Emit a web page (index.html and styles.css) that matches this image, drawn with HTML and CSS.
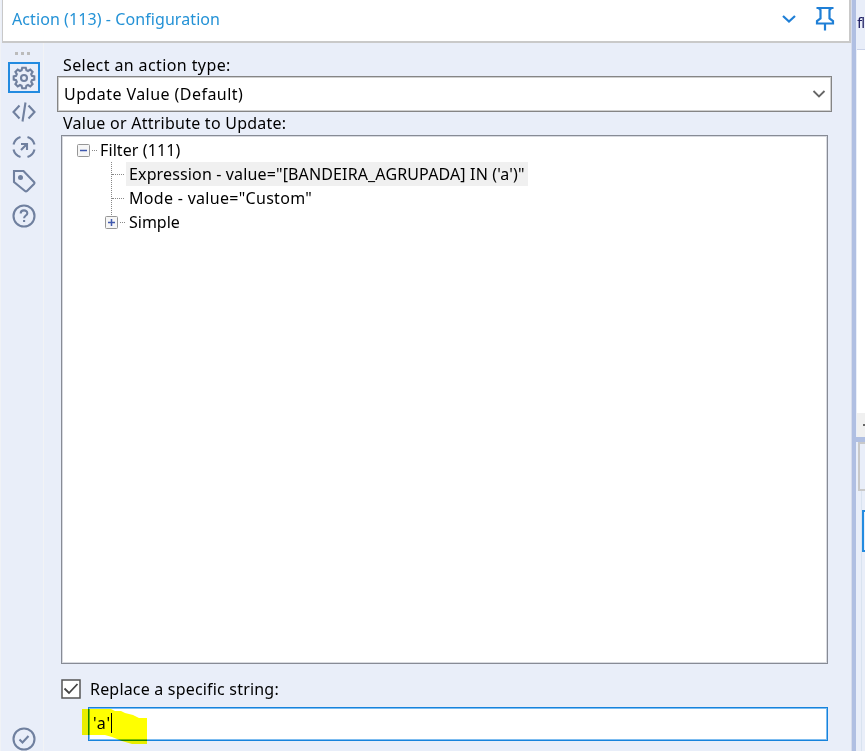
FILE: index.html
```
<!DOCTYPE html>
<html lang="en">
<head>
  <meta charset="UTF-8">
  <meta name="viewport" content="width=device-width, initial-scale=1.0">
  <title>Action (113) - Configuration</title>
  <link rel="stylesheet" href="styles.css">
</head>
<body>
  <div class="app">
    <div class="panel">
      <div class="header">
        <span class="title">Action (113) - Configuration</span>
        <svg class="collapse" width="16" height="12" viewBox="0 0 16 12"><path d="M2 3l6 5.500 6-5.500"/></svg>
        <svg class="pin" width="20" height="26" viewBox="0 0 20 26"><path d="M1.500 2h17M4 2.500l1.500 1.500v8.500l-3.500 2.500v2.500h16v-2.500l-3.500-2.500v-8.500l1.500-1.500M10 18v6.500"/></svg>
      </div>

      <div class="content">
        <!-- Left icon bar -->
        <div class="toolbar">
          <div class="grip"><i></i><i></i><i></i></div>
          <div class="tool active">
            <svg width="24" height="24" viewBox="0 0 24 24"><path d="M10.200 1.800h3.600l.6 2.500 1.600.7 2.300-1.400 2.300 2.300-1.400 2.300.7 1.600 2.400.6v3.200l-2.400.6-.7 1.600 1.400 2.300-2.300 2.300-2.300-1.400-1.600.7-.6 2.500h-3.600l-.6-2.500-1.600-.7-2.300 1.400-2.300-2.300 1.400-2.300-.7-1.600-2.400-.6v-3.200l2.400-.6.7-1.600-1.400-2.300 2.300-2.300 2.300 1.400 1.600-.7z"/><circle cx="12" cy="12" r="3"/></svg>
          </div>
          <div class="tool">
            <svg width="24" height="24" viewBox="0 0 24 24"><path d="M7.500 5.500L1.500 12 7.500 18.500M16.500 5.500l6 6.500-6 6.500M13.500 2.500l-3 19"/></svg>
          </div>
          <div class="tool">
            <svg width="24" height="24" viewBox="0 0 24 24"><path d="M1.500 9.500A10.500 10.500 0 0 1 8.500 2M15.500 2a10.500 10.500 0 0 1 7 7.500M22.500 14.500a10.500 10.500 0 0 1-7 7.500M8.500 22A10.500 10.500 0 0 1 1.500 14.500M9 9h6v6M15 9l-6 6"/></svg>
          </div>
          <div class="tool">
            <svg width="24" height="24" viewBox="0 0 24 24"><path d="M2 2h9.500L22 13a1.500 1.500 0 0 1 0 2l-7 7a1.500 1.500 0 0 1-2 0L2 13z"/><circle class="dot" cx="8.500" cy="8.500" r="2.500"/></svg>
          </div>
          <div class="tool">
            <svg width="24" height="24" viewBox="0 0 24 24"><circle cx="12" cy="12" r="10.500"/><path d="M8.700 9.500c0-4.200 6.600-4 6.600-.3 0 2.400-3.200 2.300-3.200 5M12.100 16v2"/></svg>
          </div>
          <div class="tool status">
            <svg width="24" height="24" viewBox="0 0 24 24"><circle cx="12" cy="12" r="10.500"/><path d="M7.500 12.500l3 3 6-6.500"/></svg>
          </div>
        </div>

        <div class="form">
          <div class="label">Select an action type:</div>
          <div class="select">
            <span class="select-text">Update Value (Default)</span>
            <svg width="14" height="10" viewBox="0 0 14 10"><path d="M1.500 2l5.500 5.500L12.500 2"/></svg>
          </div>
          <div class="label second">Value or Attribute to Update:</div>

          <div class="tree">
            <div class="row root">
              <svg class="box" width="13" height="13" viewBox="0 0 13 13"><rect x=".5" y=".5" width="12" height="12" rx="1"/><path d="M3 6.500h7"/></svg>
              <span class="dots short"></span>
              <span class="node filter">Filter (111)</span>
            </div>
            <div class="children">
              <div class="row">
                <span class="dots"></span>
                <span class="node selected">Expression - value="[BANDEIRA_AGRUPADA] IN ('a')"</span>
              </div>
              <div class="row">
                <span class="dots"></span>
                <span class="node mode">Mode - value="Custom"</span>
              </div>
            </div>
            <div class="row last">
              <svg class="box" width="13" height="13" viewBox="0 0 13 13"><rect x=".5" y=".5" width="12" height="12" rx="1"/><path d="M3 6.500h7M6.500 3v7"/></svg>
              <span class="dots short"></span>
              <span class="node simple">Simple</span>
            </div>
          </div>

          <div class="check">
            <svg width="20" height="20" viewBox="0 0 20 20"><rect x="1" y="1" width="18" height="18"/><path d="M3.500 9.500l4.500 4.500 8.500-9"/></svg>
            <span class="check-text">Replace a specific string:</span>
          </div>
          <div class="input">
            <span class="value">'a'</span><span class="caret"></span>
            <!-- Marker stroke over the value -->
            <svg class="marker" width="65" height="35" viewBox="0 0 65 35"><path d="M0 0h29l4 2h6l4 2 8 2 6 3h8v26H50l-10-3-10-4-7-2H0z"/></svg>
          </div>
        </div>
      </div>
    </div>

    <div class="splitter"></div>

    <!-- Neighbouring window, cut off at the edge -->
    <div class="side">
      <div class="tab">fl</div>
      <div class="canvas"></div>
      <div class="scroll"><i></i></div>
      <div class="side-splitter"></div>
      <div class="side-head"></div>
      <div class="side-body"><div class="side-tool"></div></div>
    </div>
  </div>
</body>
</html>
```

FILE: styles.css
```
* {
  box-sizing: border-box;
}

body {
  margin: 0;
  font-family: "Noto Sans", "Open Sans", sans-serif;
  font-size: 16px;
  color: #000;
  background-color: #e9eef9;
}

svg {
  display: block;
  flex: none;
  fill: none;
}

.app {
  display: flex;
  width: 865px;
  height: 751px;
  overflow: hidden;
  white-space: nowrap;
}

.panel {
  display: flex;
  flex: none;
  flex-direction: column;
  width: 851px;
  padding-left: 2px;
  border-left: 1px solid #f0f2f6;
}

.header {
  display: flex;
  align-items: center;
  width: 849px;
  height: 43px;
  margin-left: -1px;
  padding: 0 14px 4px 9px;
  background-color: #fff;
  border: 1px solid #c9c9c9;
  border-width: 0 2px 2px 1px;
  color: #2492d6;
}

.header svg {
  stroke: #1f7fd6;
  stroke-width: 2.2;
}

.title {
  flex: 1;
  letter-spacing: 0.08px;
}

.pin {
  margin-left: 18px;
}

.content {
  display: flex;
  flex: 1;
}

.toolbar {
  display: flex;
  flex-direction: column;
  align-items: center;
  width: 41px;
  padding: 9px 0 0 2px;
  border-right: 1px solid #f2f3f5;
}

.grip {
  display: flex;
  gap: 3px;
  margin: 0 0 7px -3px;
}

.grip i {
  width: 3px;
  height: 3px;
  background-color: #bbb;
}

.tool {
  display: flex;
  justify-content: center;
  align-items: center;
  width: 32px;
  height: 34px;
  margin-bottom: 0.5px;
}

.tool svg {
  stroke: #70809f;
  stroke-width: 2.1;
}

.tool .dot {
  fill: #70809f;
  stroke: none;
}

.active {
  height: 31px;
  margin-bottom: 2px;
  border: 2px solid #238be0;
}

.status {
  margin: auto 0 -5px;
}

.form {
  display: flex;
  flex-direction: column;
  padding: 12px 0 0 13px;
}

.label {
  height: 21px;
  padding-left: 6px;
  line-height: 21px;
  letter-spacing: 0.4px;
}

.second {
  height: 23px;
  line-height: 22px;
  letter-spacing: 0.25px;
}

.select {
  display: flex;
  justify-content: space-between;
  align-items: center;
  width: 775px;
  height: 36px;
  padding: 0 5px 0 6px;
  background-color: #fff;
  border: 1px solid #858585;
  box-shadow: inset 0 0 0 1px #cfcfcf;
}

.select-text {
  letter-spacing: 0.45px;
}

.select svg {
  stroke: #666;
  stroke-width: 1.8;
}

.tree {
  width: 767px;
  height: 529px;
  margin-left: 4px;
  padding: 2px 0 0 15px;
  background-color: #fff;
  border: 1px solid #878b95;
  box-shadow: inset 0 0 0 1px #d8dae0;
}

.row {
  display: flex;
  align-items: center;
  height: 24px;
}

.box {
  stroke: #969696;
}

.box rect {
  fill: #f6f6f6;
}

.box path {
  stroke: #4059ae;
  stroke-width: 1.5;
}

.dots {
  width: 12px;
  margin-right: 2px;
  border-top: 1px dotted #888;
}

.short {
  width: 5px;
  margin: 0 0 0 2px;
}

.node {
  height: 24px;
  padding: 0 3px;
  line-height: 24px;
}

.filter {
  letter-spacing: 0.1px;
}

.children {
  height: 53px;
  margin: 0 0 -5px 34px;
  border-left: 1px dotted #888;
}

.selected {
  background-color: #f0f0f0;
  letter-spacing: 0.14px;
}

.mode {
  letter-spacing: 0.3px;
}

.last {
  padding-left: 28px;
}

.simple {
  padding-left: 4px;
}

.check {
  display: flex;
  align-items: center;
  gap: 9px;
  height: 20px;
  margin: 15px 0 0 4px;
}

.check-text {
  letter-spacing: 0.19px;
}

.check rect {
  fill: #fff;
  stroke: #555;
  stroke-width: 1.5;
}

.check path {
  stroke: #444;
  stroke-width: 1.8;
}

.input {
  display: flex;
  position: relative;
  align-items: center;
  width: 740px;
  height: 34px;
  margin: 8px 0 0 31px;
  padding: 0 0 3px 4px;
  background-color: #fff;
  border: 1px solid #1783dc;
  box-shadow: inset 0 0 0 1px #7dbcf0;
}

.value {
  letter-spacing: 0.8px;
}

.caret {
  width: 1.5px;
  height: 20px;
  background-color: #000;
}

/* highlighter lies over the field's left end */
.marker {
  position: absolute;
  top: 1px;
  left: -7px;
  fill: #ff0;
  mix-blend-mode: multiply;
}

.splitter {
  flex: none;
  width: 5px;
  background-color: #b0bfe2;
  border-left: 1px solid #d6dcec;
}

.side {
  display: flex;
  flex: 1;
  flex-direction: column;
  min-width: 0;
  padding-left: 1px;
  overflow: hidden;
}

.tab {
  height: 50px;
  padding-top: 12px;
  border-bottom: 1px solid #cbd3e8;
  color: #1b1b60;
  font-size: 15px;
  letter-spacing: -1px;
}

.canvas {
  height: 363px;
  background-color: #fff;
}

.scroll {
  display: flex;
  justify-content: flex-end;
  align-items: center;
  height: 24px;
  background-color: #f0f0f0;
}

.scroll i {
  width: 2px;
  height: 2px;
  background-color: #666;
}

.side-splitter {
  height: 5px;
  margin-left: -1px;
  background-color: #b0bfe2;
}

.side-head {
  height: 49px;
  margin-left: 1px;
  border: 2px solid #c9c9c9;
  border-right: none;
}

.side-body {
  flex: 1;
  margin-left: 4px;
  padding-top: 19px;
  border-left: 1px solid #d9e3f0;
}

.side-tool {
  height: 42px;
  border: 2px solid #238be0;
  border-right: none;
}
```
